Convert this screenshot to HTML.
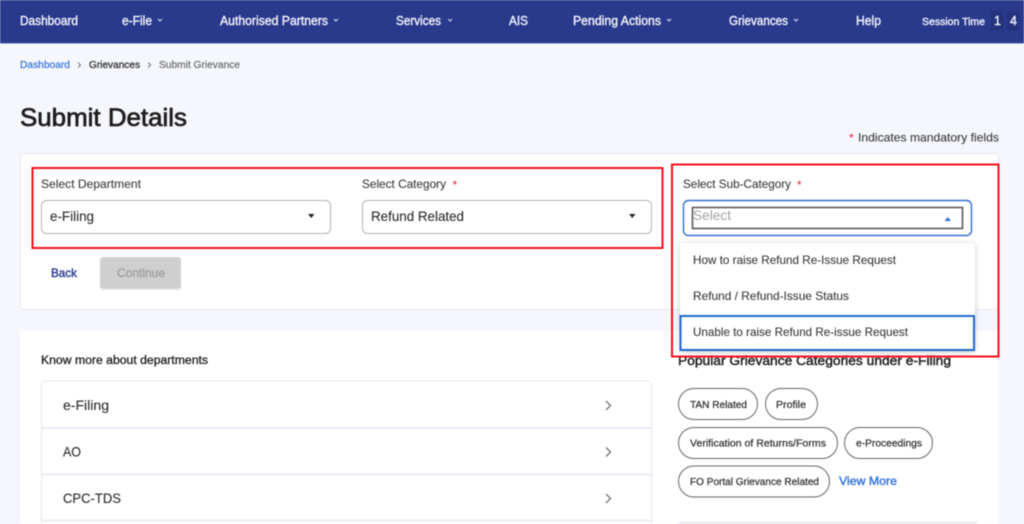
<!DOCTYPE html>
<html lang="en"><head><meta charset="utf-8"><title>Submit Details</title>
<style>
html,body{margin:0;padding:0;width:1024px;height:524px;overflow:hidden;background:#f5f7fc}
svg{display:block;position:absolute;left:0;top:0;filter:blur(.4px)}
text{font-family:"Liberation Sans",Arial,sans-serif}
.n{font-size:12.5px;fill:#eef0fa;stroke:#eef0fa;stroke-width:.4px}
.l{font-size:12px;fill:#3a3a3a;stroke:#3a3a3a;stroke-width:.1px}
.v{font-size:14px;fill:#2b2b2b;stroke:#2b2b2b;stroke-width:.1px}
.p{font-size:10.5px;fill:#333;stroke:#333;stroke-width:.25px}
.pill{fill:#fff;stroke:#666;stroke-width:1}
.chev{fill:none;stroke:#dfe2f5;stroke-width:1}
.gc{fill:none;stroke:#777;stroke-width:1.4}
</style></head><body>
<svg width="1024" height="524" viewBox="0 0 1024 524" xmlns="http://www.w3.org/2000/svg">
<rect width="1024" height="524" fill="#f5f7fc"/>
<!-- nav -->
<rect width="1024" height="43" fill="#29398b"/>
<rect y="42.500" width="1024" height="1" fill="#4653ad"/>
<text class="n" x="20" y="25" textLength="58" lengthAdjust="spacingAndGlyphs">Dashboard</text>
<text class="n" x="122" y="25" textLength="30" lengthAdjust="spacingAndGlyphs">e-File</text>
<path class="chev" d="M158 19l2 2 2-2"/>
<text class="n" x="220" y="25" textLength="108" lengthAdjust="spacingAndGlyphs">Authorised Partners</text>
<path class="chev" d="M334 19l2 2 2-2"/>
<text class="n" x="396" y="25" textLength="45" lengthAdjust="spacingAndGlyphs">Services</text>
<path class="chev" d="M448 19l2 2 2-2"/>
<text class="n" x="509" y="25" textLength="19" lengthAdjust="spacingAndGlyphs">AIS</text>
<text class="n" x="573" y="25" textLength="88" lengthAdjust="spacingAndGlyphs">Pending Actions</text>
<path class="chev" d="M667 19l2 2 2-2"/>
<text class="n" x="729" y="25" textLength="59" lengthAdjust="spacingAndGlyphs">Grievances</text>
<path class="chev" d="M794 19l2 2 2-2"/>
<text class="n" x="856" y="25" textLength="25" lengthAdjust="spacingAndGlyphs">Help</text>
<text class="n" x="922" y="25" style="font-size:10.5px" textLength="63" lengthAdjust="spacingAndGlyphs">Session Time</text>
<rect x="991" y="11" width="12" height="19" fill="#25337e"/>
<rect x="1007" y="11" width="12" height="19" fill="#25337e"/>
<text class="n" x="994" y="25" style="font-size:12.5px">1</text>
<text class="n" x="1010" y="25" style="font-size:12.5px">4</text>
<!-- breadcrumb -->
<text x="20" y="68" style="font-size:10.5px" fill="#2f6fd8" stroke="#2f6fd8" stroke-width=".15" textLength="50" lengthAdjust="spacingAndGlyphs">Dashboard</text>
<path d="M78 62.500l2.500 2.500-2.500 2.500" fill="none" stroke="#777"/>
<text x="89" y="68" style="font-size:10.5px" fill="#333" stroke="#333" stroke-width=".3" textLength="51" lengthAdjust="spacingAndGlyphs">Grievances</text>
<path d="M148 62.500l2.500 2.500-2.500 2.500" fill="none" stroke="#777"/>
<text x="159" y="68" style="font-size:10.5px" fill="#666" stroke="#666" stroke-width=".15" textLength="81" lengthAdjust="spacingAndGlyphs">Submit Grievance</text>
<!-- title -->
<text x="20" y="126" style="font-size:25px" fill="#1e1e1e" stroke="#1e1e1e" stroke-width=".7" textLength="167" lengthAdjust="spacingAndGlyphs">Submit Details</text>
<text x="849" y="142" style="font-size:12px" fill="#e0202c">*</text>
<text class="l" x="858" y="141.500" textLength="141" lengthAdjust="spacingAndGlyphs">Indicates mandatory fields</text>
<!-- top card -->
<rect x="20.500" y="153.500" width="978" height="156" rx="3" fill="#fff" stroke="#e6e8f1"/>
<text class="l" x="41" y="188" textLength="100" lengthAdjust="spacingAndGlyphs">Select Department</text>
<rect x="41.500" y="200.500" width="289" height="33" rx="5" fill="#fff" stroke="#b4b4b4"/>
<text class="v" x="50" y="221" textLength="44" lengthAdjust="spacingAndGlyphs">e-Filing</text>
<path d="M308 214h6.500l-3.250 4z" fill="#222"/>
<text class="l" x="362" y="188" textLength="84" lengthAdjust="spacingAndGlyphs">Select Category</text>
<text x="452.500" y="189" style="font-size:12px" fill="#e0202c">*</text>
<rect x="362.500" y="200.500" width="289" height="33" rx="5" fill="#fff" stroke="#b4b4b4"/>
<text class="v" x="371" y="221" textLength="93" lengthAdjust="spacingAndGlyphs">Refund Related</text>
<path d="M629 214h6.500l-3.250 4z" fill="#222"/>
<text x="51" y="277" style="font-size:12px" fill="#2f3b93" stroke="#2f3b93" stroke-width=".4" textLength="26" lengthAdjust="spacingAndGlyphs">Back</text>
<rect x="100" y="258" width="81" height="32" rx="3" fill="#000" opacity=".1"/>
<rect x="100" y="257" width="81" height="31.500" rx="3" fill="#cfcfcf"/>
<text x="117" y="277" style="font-size:12px" fill="#a0a0a0" stroke="#a0a0a0" stroke-width=".4" textLength="48" lengthAdjust="spacingAndGlyphs">Continue</text>
<text class="l" x="683" y="188" textLength="108" lengthAdjust="spacingAndGlyphs">Select Sub-Category</text>
<text x="797" y="189" style="font-size:12px" fill="#e0202c">*</text>
<rect x="683.500" y="200.500" width="288" height="35" rx="5" fill="#fff" stroke="#2e6fd6" stroke-width="1.400"/>
<rect x="692.500" y="207.500" width="270" height="21" fill="#fff" stroke="#5a5a5a" stroke-width="1.600"/>
<text x="693" y="220" style="font-size:14px" fill="#a2a2a2" textLength="38" lengthAdjust="spacingAndGlyphs">Select</text>
<path d="M944.500 221h6.500l-3.250-4z" fill="#2e6fd6"/>
<!-- lower card -->
<rect x="20" y="331" width="978" height="193" fill="#fff"/>
<text x="41" y="364" style="font-size:11.500px" fill="#222" stroke="#222" stroke-width=".3" textLength="167" lengthAdjust="spacingAndGlyphs">Know more about departments</text>
<path d="M41.500 524V385a4 4 0 0 1 4-4h602a4 4 0 0 1 4 4v139" fill="#fff" stroke="#e4e6f2"/>
<path d="M42 428h609M42 474.500h609M42 520.500h609" stroke="#e4e6f2" stroke-width="1.400"/>
<text class="v" x="63" y="410" textLength="46" lengthAdjust="spacingAndGlyphs">e-Filing</text>
<text class="v" x="63" y="456.500" textLength="18" lengthAdjust="spacingAndGlyphs">AO</text>
<text class="v" x="63" y="503" textLength="58" lengthAdjust="spacingAndGlyphs">CPC-TDS</text>
<path class="gc" d="M606 401l4.500 4.500-4.500 4.500M606 447.500l4.500 4.500-4.500 4.500M606 494l4.500 4.500-4.500 4.500"/>
<text x="678" y="365" style="font-size:13px" fill="#222" stroke="#222" stroke-width=".45" textLength="273" lengthAdjust="spacingAndGlyphs">Popular Grievance Categories under e-Filing</text>
<rect class="pill" x="678.500" y="388.500" width="79" height="31" rx="15.500"/>
<text class="p" x="690" y="408" textLength="57" lengthAdjust="spacingAndGlyphs">TAN Related</text>
<rect class="pill" x="765.500" y="388.500" width="52" height="31" rx="15.500"/>
<text class="p" x="776" y="408" textLength="30" lengthAdjust="spacingAndGlyphs">Profile</text>
<rect class="pill" x="678.500" y="427.500" width="159" height="31" rx="15.500"/>
<text class="p" x="690" y="446.500" textLength="136" lengthAdjust="spacingAndGlyphs">Verification of Returns/Forms</text>
<rect class="pill" x="844.500" y="427.500" width="88" height="31" rx="15.500"/>
<text class="p" x="856" y="446.500" textLength="66" lengthAdjust="spacingAndGlyphs">e-Proceedings</text>
<rect class="pill" x="678.500" y="466" width="151" height="31" rx="15.500"/>
<text class="p" x="690" y="485" textLength="129" lengthAdjust="spacingAndGlyphs">FO Portal Grievance Related</text>
<text x="839" y="485" style="font-size:12px" fill="#2e6fd6" stroke="#2e6fd6" stroke-width=".35" textLength="58" lengthAdjust="spacingAndGlyphs">View More</text>
<rect x="678" y="522" width="299" height="1.500" fill="#e4e6f2"/>
<!-- gap under card beside dropdown -->
<rect x="973" y="310" width="25" height="21" fill="#f5f7fc"/>
<rect x="652" y="310" width="28" height="21" fill="#f5f7fc"/>
<!-- dropdown -->
<rect x="680" y="244" width="295" height="108" rx="3" fill="#000" opacity=".22" style="filter:blur(3px)"/>
<rect x="680" y="243" width="295" height="108" rx="3" fill="#fff"/>
<text class="l" x="693" y="264" textLength="203" lengthAdjust="spacingAndGlyphs">How to raise Refund Re-Issue Request</text>
<text class="l" x="693" y="300" textLength="156" lengthAdjust="spacingAndGlyphs">Refund / Refund-Issue Status</text>
<rect x="680.500" y="316" width="293.500" height="34" fill="#fff" stroke="#2068c8" stroke-width="2"/>
<text class="l" x="693" y="336" textLength="215" lengthAdjust="spacingAndGlyphs">Unable to raise Refund Re-issue Request</text>
<!-- annotations -->
<rect x="32.500" y="168" width="630" height="80" fill="none" stroke="#f5101a" stroke-width="2"/>
<rect x="672" y="164.500" width="326.500" height="192" fill="none" stroke="#f5101a" stroke-width="2"/>
</svg>
</body></html>
